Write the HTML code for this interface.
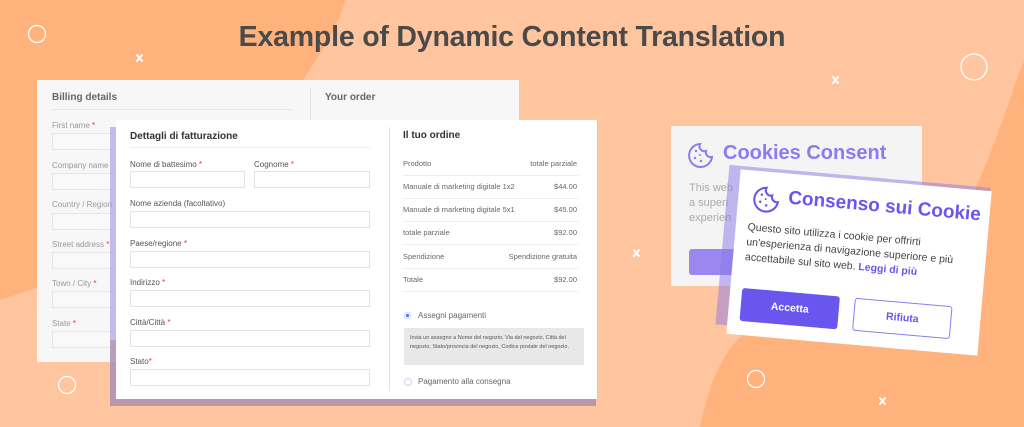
<!DOCTYPE html>
<html><head><meta charset="utf-8"><style>
*{margin:0;padding:0;box-sizing:border-box}
body{width:1024px;height:427px;overflow:hidden;background:#ffc59e;font-family:"Liberation Sans",sans-serif;position:relative}
.abs{position:absolute}
h1{position:absolute;left:0;width:1024px;top:21px;text-align:center;font-size:28.5px;color:#4a4a4a;font-weight:bold;letter-spacing:-0.2px}
.back{left:37px;top:80px;width:482px;height:282px;background:#f7f7f7}
.lbl{position:absolute;font-size:8px;color:#999}
.req{color:#e33}
.inp{position:absolute;border:1px solid #e6e6e6;background:#f9f9f9;height:17px}
.front{left:116px;top:120px;width:481px;height:279px;background:#fff}
.fl{position:absolute;font-size:8px;color:#555}
.fi{position:absolute;border:1px solid #e3e3e3;height:17px;background:#fff}
.row{position:absolute;left:403px;width:176px;font-size:7.5px;color:#666;border-bottom:1px solid #eee;height:23px}
.row span{position:absolute;top:6px}
.row .r{right:2px}
</style></head><body>
<svg class="abs" style="left:0;top:0" width="1024" height="427">
<path d="M0 0 H345 C335 40 300 80 265 140 C240 190 180 240 120 260 L0 300 Z" fill="#ffb27c"/>
<path d="M700 427 C720 330 760 300 880 290 C960 280 1000 120 1024 60 V427 Z" fill="#ffb27c"/>
<circle cx="37" cy="34" r="8.5" fill="none" stroke="#fff" stroke-width="1.3"/>
<circle cx="974" cy="67" r="13" fill="none" stroke="#fff" stroke-width="1.3"/>
<circle cx="67" cy="385" r="8.5" fill="none" stroke="#fff" stroke-width="1.3"/>
<circle cx="756" cy="379" r="8.5" fill="none" stroke="#fff" stroke-width="1.3"/>
<g stroke="#fff" stroke-width="2" stroke-linecap="round">
<path d="M137 55 l5 6 M142 55 l-5 6"/><path d="M833 77 l5 6 M838 77 l-5 6"/>
<path d="M634 250 l5 6 M639 250 l-5 6"/><path d="M880 398 l5 6 M885 398 l-5 6"/>
</g></svg>
<h1>Example of Dynamic Content Translation</h1>

<div class="abs back">
<div class="abs" style="left:15px;top:12px;font-size:10px;font-weight:bold;color:#666">Billing details</div>
<div class="abs" style="left:15px;top:29px;width:240px;border-top:1px solid #e6e6e6"></div>
<div class="abs" style="left:273px;top:8px;height:274px;border-left:1px solid #e6e6e6"></div>
<div class="abs" style="left:288px;top:12px;font-size:10px;font-weight:bold;color:#666">Your order</div>
<div class="lbl" style="left:15px;top:41px">First name <span class="req">*</span></div><div class="inp" style="left:15px;top:53px;width:70px"></div>
<div class="lbl" style="left:15px;top:81px">Company name</div><div class="inp" style="left:15px;top:93px;width:70px"></div>
<div class="lbl" style="left:15px;top:120px">Country / Region</div><div class="inp" style="left:15px;top:133px;width:70px"></div>
<div class="lbl" style="left:15px;top:160px">Street address <span class="req">*</span></div><div class="inp" style="left:15px;top:172px;width:70px"></div>
<div class="lbl" style="left:15px;top:199px">Town / City <span class="req">*</span></div><div class="inp" style="left:15px;top:211px;width:70px"></div>
<div class="lbl" style="left:15px;top:239px">State <span class="req">*</span></div><div class="inp" style="left:15px;top:251px;width:70px"></div>
</div>

<div class="abs" style="left:110px;top:127px;width:486px;height:279px;background:rgba(150,140,230,.55)"></div>
<div class="abs" style="left:110px;top:340px;width:486px;height:66px;background:rgba(180,140,160,.6)"></div>
<div class="abs front">
<div class="abs" style="left:14px;top:11px;font-size:10px;font-weight:bold;color:#333">Dettagli di fatturazione</div>
<div class="abs" style="left:14px;top:27px;width:240px;border-top:1px solid #eee"></div>
<div class="fl" style="left:14px;top:40px">Nome di battesimo <span class="req">*</span></div><div class="fi" style="left:14px;top:51px;width:115px"></div>
<div class="fl" style="left:138px;top:40px">Cognome <span class="req">*</span></div><div class="fi" style="left:138px;top:51px;width:116px"></div>
<div class="fl" style="left:14px;top:79px">Nome azienda (facoltativo)</div><div class="fi" style="left:14px;top:91px;width:240px"></div>
<div class="fl" style="left:14px;top:119px">Paese/regione <span class="req">*</span></div><div class="fi" style="left:14px;top:131px;width:240px"></div>
<div class="fl" style="left:14px;top:158px">Indirizzo <span class="req">*</span></div><div class="fi" style="left:14px;top:170px;width:240px"></div>
<div class="fl" style="left:14px;top:198px">Città/Città <span class="req">*</span></div><div class="fi" style="left:14px;top:210px;width:240px"></div>
<div class="fl" style="left:14px;top:237px">Stato<span class="req">*</span></div><div class="fi" style="left:14px;top:249px;width:240px"></div>
<div class="abs" style="left:273px;top:7px;height:264px;border-left:1px solid #e3e3e3"></div>
</div>
<div class="abs" style="left:403px;top:130px;font-size:10px;font-weight:bold;color:#333">Il tuo ordine</div>
<div class="row" style="top:153px"><span>Prodotto</span><span class="r">totale parziale</span></div>
<div class="row" style="top:176px"><span>Manuale di marketing digitale 1x2</span><span class="r">$44.00</span></div>
<div class="row" style="top:199px"><span>Manuale di marketing digitale 5x1</span><span class="r">$45.00</span></div>
<div class="row" style="top:222px"><span>totale parziale</span><span class="r">$92.00</span></div>
<div class="row" style="top:246px"><span>Spendizione</span><span class="r">Spendizione gratuita</span></div>
<div class="row" style="top:269px"><span>Totale</span><span class="r">$92.00</span></div>
<div class="abs" style="left:404px;top:312px;width:7px;height:7px;border-radius:50%;border:1px solid #cfd8ff;background:radial-gradient(#3b7bff 45%,#fff 50%)"></div>
<div class="abs" style="left:418px;top:311px;font-size:8px;color:#666">Assegni pagamenti</div>
<div class="abs" style="left:404px;top:328px;width:180px;height:37px;background:#e8e8e8;font-size:5.5px;color:#555;padding:6px 6px;line-height:9px">Invia un assegno a Nome del negozio, Via del negozio, Città del negozio, Stato/provincia del negozio, Codice postale del negozio.</div>
<div class="abs" style="left:404px;top:378px;width:8px;height:8px;border-radius:50%;border:1px solid #cfd0f5"></div>
<div class="abs" style="left:418px;top:377px;font-size:8px;color:#666">Pagamento alla consegna</div>

<div class="abs" style="left:671px;top:126px;width:251px;height:160px;background:#f4f4f4">
<svg class="abs" style="left:16px;top:16px" width="27" height="27" viewBox="0 0 27 27"><path d="M13 2 A11.5 11.5 0 1 0 25 15 A5 5 0 0 1 19 9 A5 5 0 0 1 13 2Z" fill="none" stroke="#8c7cf0" stroke-width="2"/><g fill="#8c7cf0"><circle cx="9" cy="9" r="1.2"/><circle cx="8" cy="16" r="1.2"/><circle cx="14" cy="19" r="1.2"/><circle cx="13" cy="13" r="1"/></g></svg>
<div class="abs" style="left:52px;top:16px;font-size:20px;font-weight:bold;color:#8c7cf0">Cookies Consent</div>
<div class="abs" style="left:18px;top:55px;font-size:11px;color:#aaa;line-height:15px">This web<br>a superi<br>experien</div>
<div class="abs" style="left:18px;top:123px;width:60px;height:26px;background:#9a88f0;border-radius:3px"></div>
</div>

<div class="abs" style="left:722px;top:176px;width:262px;height:160px;background:rgba(140,120,230,.5);transform:rotate(5deg);transform-origin:center"></div>
<div class="abs" style="left:733px;top:180px;width:252px;height:165px;background:#fff;transform:rotate(5deg);transform-origin:center">
<svg class="abs" style="left:14px;top:14px" width="28" height="28" viewBox="0 0 27 27"><path d="M13 2 A11.5 11.5 0 1 0 25 15 A5 5 0 0 1 19 9 A5 5 0 0 1 13 2Z" fill="none" stroke="#6a56ee" stroke-width="2"/><g fill="#6a56ee"><circle cx="9" cy="9" r="1.2"/><circle cx="8" cy="16" r="1.2"/><circle cx="14" cy="19" r="1.2"/><circle cx="13" cy="13" r="1"/></g></svg>
<div class="abs" style="left:50px;top:14px;font-size:19px;font-weight:bold;color:#6a56ee;white-space:nowrap">Consenso sui Cookie</div>
<div class="abs" style="left:12px;top:50px;width:235px;font-size:10.5px;color:#444;line-height:15px">Questo sito utilizza i cookie per offrirti un'esperienza di navigazione superiore e più accettabile sul sito web. <b style="color:#6a56ee">Leggi di più</b></div>
<div class="abs" style="left:12px;top:118px;width:98px;height:33px;background:#6a56ee;border-radius:3px;color:#fff;font-size:10.5px;font-weight:bold;text-align:center;line-height:33px">Accetta</div>
<div class="abs" style="left:125px;top:118px;width:98px;height:33px;border:1.5px solid #8c7cf0;border-radius:3px;color:#6a56ee;font-size:10.5px;font-weight:bold;text-align:center;line-height:30px">Rifiuta</div>
</div>
</body></html>
